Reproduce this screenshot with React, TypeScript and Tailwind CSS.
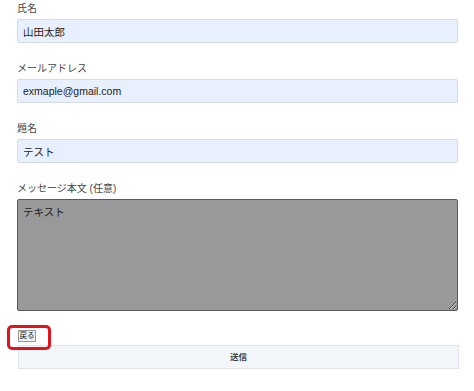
import React from "react";

const font = "font-['Liberation_Sans','Noto_Sans_CJK_JP',sans-serif]";

type FieldProps = {
  label: string;
  value: string;
};

const Field = ({ label, value }: FieldProps) => (
  <div className="flex flex-col">
    <label className="h-[14px] text-[10px] leading-[14px] text-[#444] mb-[3px]">{label}</label>
    <input
      readOnly
      defaultValue={value}
      className={`h-[24px] w-[441px] rounded-[2px] border border-[#d5dce6] bg-[#e8f0fe] px-[5px] text-[10.5px] text-[#222] outline-none ${font}`}
    />
  </div>
);

const App = () => {
  return (
    <div className={`min-h-[391px] w-[474px] bg-white pl-[17px] pt-[2px] ${font}`}>
      <div className="flex flex-col gap-[19px]">
        <Field label="氏名" value="山田太郎" />
        <Field label="メールアドレス" value="exmaple@gmail.com" />
        <Field label="題名" value="テスト" />
        <div className="flex flex-col">
          <label className="h-[14px] text-[10px] leading-[14px] text-[#444] mb-[3px]">
            メッセージ本文 (任意)
          </label>
          <textarea
            readOnly
            defaultValue="テキスト"
            className={`h-[112px] w-[441px] rounded-[2px] border border-[#5a5a5a] bg-[#999999] px-[5px] py-[5px] text-[10.5px] text-[#222] outline-none ${font}`}
          />
        </div>
      </div>

      <div className="relative mt-[19px] h-[12px]">
        <button className="absolute left-[1px] top-0 h-[12px] w-[18px] border border-[#999] bg-[#f0f0f0] text-[7.5px] leading-[10px] text-[#222]">
          戻る
        </button>
        {/* highlight marker around the back button */}
        <div className="pointer-events-none absolute left-[-10px] top-[-5px] h-[25px] w-[44px] rounded-[5px] border-[3px] border-[#e0141e]" />
      </div>

      <button className="mt-[3px] ml-[1px] flex h-[24px] w-[441px] items-center justify-center border border-[#dfe4ea] bg-[#f4f7fa] text-[8.5px] font-bold text-[#444]">
        送信
      </button>
    </div>
  );
};

export default App;
